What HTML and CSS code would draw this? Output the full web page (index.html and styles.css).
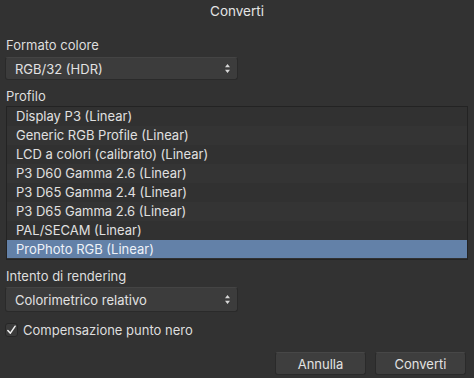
FILE: index.html
```html
<!DOCTYPE html>
<html lang="it">
<head>
<meta charset="utf-8">
<link rel="stylesheet" href="styles.css">
</head>
<body>
<div class="dialog">
  <div class="title">Converti</div>
  <div class="label first">Formato colore</div>
  <div class="select s1">
    <span>RGB/32 (HDR)</span>
    <svg class="arrows" width="7" height="11" viewBox="0 0 7 11"><path d="M3.5 1 L6 4.2 H1 Z M3.5 10 L6 6.8 H1 Z" fill="#d8d8d8"/></svg>
  </div>
  <div class="label profilo">Profilo</div>
  <div class="list">
    <div class="row">Display P3 (Linear)</div>
    <div class="row alt">Generic RGB Profile (Linear)</div>
    <div class="row">LCD a colori (calibrato) (Linear)</div>
    <div class="row alt">P3 D60 Gamma 2.6 (Linear)</div>
    <div class="row">P3 D65 Gamma 2.4 (Linear)</div>
    <div class="row alt">P3 D65 Gamma 2.6 (Linear)</div>
    <div class="row">PAL/SECAM (Linear)</div>
    <div class="row selected">ProPhoto RGB (Linear)</div>
  </div>
  <div class="label intento">Intento di rendering</div>
  <div class="select s2">
    <span>Colorimetrico relativo</span>
    <svg class="arrows" width="7" height="11" viewBox="0 0 7 11"><path d="M3.5 1 L6 4.2 H1 Z M3.5 10 L6 6.8 H1 Z" fill="#d8d8d8"/></svg>
  </div>
  <label class="check">
    <span class="box"><svg width="12" height="12" viewBox="0 0 12 12"><path d="M2 6.5 L4.8 9.5 L10 1.8" fill="none" stroke="#f2f2f2" stroke-width="1.6" stroke-linecap="round" stroke-linejoin="round"/></svg></span>
    <span>Compensazione punto nero</span>
  </label>
  <div class="buttons">
    <button class="btn">Annulla</button>
    <button class="btn">Converti</button>
  </div>
</div>
</body>
</html>
```
FILE: styles.css
```css
html, body {
  margin: 0;
  padding: 0;
  background: #323232;
}
body {
  width: 474px;
  height: 378px;
  overflow: hidden;
  font-family: Inter, "Noto Sans", sans-serif;
  font-size: 13px;
  color: #dedede;
}
.dialog {
  display: flex;
  flex-direction: column;
  padding: 0 5px;
}
.title {
  height: 22px;
  line-height: 22px;
  text-align: center;
  font-size: 13.5px;
  color: #e4e4e4;
}
.label {
  line-height: 16px;
  padding-left: 1px;
}
.label.first { margin-top: 15px; }
.label.profilo { margin-top: 8px; }
.label.intento { margin-top: 8px; }
.select {
  width: 233px;
  box-sizing: border-box;
  display: flex;
  align-items: center;
  justify-content: space-between;
  padding: 0 6px 0 9px;
  background: #3c3c3c;
  border: 1px solid #2a2a2a;
  border-top-color: #444;
  border-radius: 3px;
  color: #e2e2e2;
}
.select.s1 { margin-top: 4px; height: 23px; }
.select.s2 { margin-top: 3px; height: 25px; }
.list {
  margin-top: 2px;
  height: 154px;
  box-sizing: border-box;
  border: 1px solid #232323;
  background: #313131;
  margin-right: 1px;
  margin-left: 1px;
  display: flex;
  flex-direction: column;
}
.row {
  height: 19px;
  line-height: 19px;
  padding-left: 9px;
  color: #e0e0e0;
}
.row.alt { background: #343434; }
.row.selected {
  background: #6381a8;
  color: #eef2f8;
  height: 18px;
  line-height: 18px;
}
.check {
  margin-top: 10px;
  display: flex;
  align-items: center;
  gap: 5px;
  height: 16px;
}
.box {
  width: 13px;
  height: 14px;
  box-sizing: border-box;
  border-radius: 3px;
  background: #3b3b3b;
  border: 1px solid #272727;
  display: flex;
  align-items: center;
  justify-content: center;
}
.buttons {
  margin-top: 14px;
  display: flex;
  justify-content: flex-end;
  gap: 9px;
  padding-right: 3px;
}
.btn {
  width: 91px;
  height: 23px;
  font-family: inherit;
  font-size: 13px;
  color: #e2e2e2;
  background: #3e3e3e;
  border: 1px solid #2a2a2a;
  border-top-color: #474747;
  border-radius: 3px;
  padding: 0;
}
```
